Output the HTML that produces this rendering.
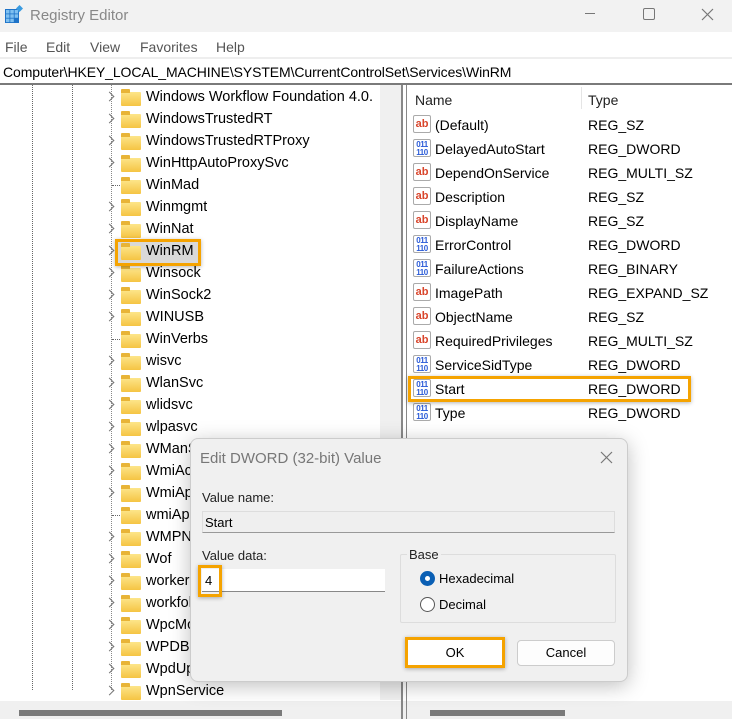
<!DOCTYPE html>
<html><head><meta charset="utf-8"><style>
*{margin:0;padding:0;box-sizing:border-box}
body{width:732px;height:719px;overflow:hidden;background:#fff;font-family:"Liberation Sans",sans-serif;color:#000;position:relative}
.abs{position:absolute}
.t{position:absolute;white-space:nowrap}
.fold{position:absolute;width:20px;height:14px;background:linear-gradient(#fde58a,#f5c443);border-radius:1px}
.fold:before{content:"";position:absolute;left:0;top:-3px;width:9px;height:4px;background:#e8b437;border-radius:1px 1px 0 0}
.chev{position:absolute;width:7px;height:7px;border-right:1.5px solid #777;border-top:1.5px solid #777;transform:rotate(45deg)}
.ic{position:absolute;width:18px;height:18px;border:1px solid #aaa;border-radius:2px;background:#fff;font-size:11px;font-weight:bold;line-height:16px;text-align:center;overflow:hidden}
.ab{color:#d9452b}
.bi{color:#2a5bd7;font-size:8px;line-height:8px;letter-spacing:-0.5px}
</style></head><body>
<div class="abs" style="left:0;top:0;width:732px;height:32px;background:#f2f2f2"></div>
<svg class="abs" style="left:5px;top:5px" width="18" height="18"><rect x="0" y="4" width="14" height="14" fill="#1e73c8"/><g fill="#7fc0f0"><rect x="1" y="5" width="3.5" height="3.5"/><rect x="5.3" y="5" width="3.5" height="3.5"/><rect x="9.6" y="5" width="3.5" height="3.5"/><rect x="1" y="9.3" width="3.5" height="3.5"/><rect x="5.3" y="9.3" width="3.5" height="3.5"/><rect x="9.6" y="9.3" width="3.5" height="3.5"/><rect x="1" y="13.6" width="3.5" height="3.5"/><rect x="5.3" y="13.6" width="3.5" height="3.5"/></g><rect x="12" y="1" width="5" height="5" fill="#3a9be0" transform="rotate(45 14.5 3.5)"/></svg>
<div class="t" style="left:30px;top:7px;font-size:15px;color:#888">Registry Editor</div>
<div class="abs" style="left:585px;top:13px;width:10px;height:1px;background:#777"></div>
<div class="abs" style="left:643px;top:8px;width:12px;height:12px;border:1.3px solid #777;border-radius:2px"></div>
<svg class="abs" style="left:701px;top:8px" width="13" height="13"><path d="M1 1L12 12M12 1L1 12" stroke="#777" stroke-width="1.2"/></svg>
<div class="t" style="left:5px;top:39px;font-size:14px;color:#555">File</div>
<div class="t" style="left:46px;top:39px;font-size:14px;color:#555">Edit</div>
<div class="t" style="left:90px;top:39px;font-size:14px;color:#555">View</div>
<div class="t" style="left:140px;top:39px;font-size:14px;color:#555">Favorites</div>
<div class="t" style="left:216px;top:39px;font-size:14px;color:#555">Help</div>
<div class="abs" style="left:0;top:57px;width:732px;height:2px;background:#eee"></div>
<div class="t" style="left:3px;top:64px;font-size:14px;letter-spacing:-0.1px">Computer\HKEY_LOCAL_MACHINE\SYSTEM\CurrentControlSet\Services\WinRM</div>
<div class="abs" style="left:0;top:83px;width:732px;height:2px;background:#7a7a7a"></div>
<div class="abs" style="left:380px;top:85px;width:21px;height:615px;background:#f0f0f0"></div>
<div class="abs" style="left:32px;top:85px;height:605px;border-left:1px dotted #666"></div>
<div class="abs" style="left:72px;top:85px;height:605px;border-left:1px dotted #666"></div>
<div class="abs" style="left:111px;top:85px;height:605px;border-left:1px dotted #888"></div>
<div class="abs" style="left:401px;top:85px;width:2px;height:634px;background:#888"></div>
<div class="abs" style="left:406px;top:85px;width:1px;height:634px;background:#888"></div>
<div id="tree"></div>
<div class="abs" style="left:115px;top:239px;width:86px;height:27px;background:#d9d9d9;border:3px solid #f5a300;box-shadow:0 1px 4px rgba(0,0,0,.3)"></div>
<div class="fold" style="left:121px;top:246px"></div>
<div class="t" style="left:146px;top:243px;font-size:14.5px">WinRM</div>
<div class="t" style="left:415px;top:92px;font-size:14px;color:#222">Name</div>
<div class="abs" style="left:581px;top:87px;width:1px;height:22px;background:#e5e5e5"></div>
<div class="t" style="left:588px;top:92px;font-size:14px;color:#222">Type</div>
<div id="vals"></div>
<div class="abs" style="left:408px;top:376px;width:283px;height:26px;border:3px solid #f5a300;box-shadow:0 1px 4px rgba(0,0,0,.3)"></div>
<div class="abs" style="left:0;top:701px;width:732px;height:18px;background:#f0f0f0"></div>
<div class="abs" style="left:401px;top:701px;width:2px;height:18px;background:#888"></div>
<div class="abs" style="left:406px;top:701px;width:1px;height:18px;background:#888"></div>
<div class="abs" style="left:19px;top:710px;width:263px;height:6px;background:#7a7a7a"></div>
<div class="abs" style="left:430px;top:710px;width:135px;height:6px;background:#7a7a7a"></div>
<div class="abs" style="left:190px;top:438px;width:438px;height:244px;background:#f0f0f0;border:1px solid #ccc;border-radius:8px;box-shadow:0 4px 20px rgba(0,0,0,.25)"></div>
<div class="t" style="left:200px;top:450px;font-size:15px;color:#777">Edit DWORD (32-bit) Value</div>
<svg class="abs" style="left:600px;top:451px" width="13" height="13"><path d="M1 1L12 12M12 1L1 12" stroke="#777" stroke-width="1.2"/></svg>
<div class="t" style="left:202px;top:490px;font-size:13px;color:#222">Value name:</div>
<div class="abs" style="left:202px;top:511px;width:413px;height:22px;background:#efefef;border:1px solid #ddd;border-bottom:1px solid #999"></div>
<div class="t" style="left:205px;top:515px;font-size:13px">Start</div>
<div class="t" style="left:202px;top:548px;font-size:13px;color:#222">Value data:</div>
<div class="abs" style="left:202px;top:569px;width:183px;height:23px;background:#fff;border-bottom:1px solid #888"></div>
<div class="abs" style="left:198px;top:565px;width:24px;height:32px;border:3px solid #f5a300;box-shadow:0 1px 4px rgba(0,0,0,.3)"></div>
<div class="t" style="left:205px;top:573px;font-size:13px">4</div>
<div class="abs" style="left:400px;top:554px;width:216px;height:69px;border:1px solid #ddd;border-radius:2px"></div>
<div class="t" style="left:407px;top:547px;font-size:13px;color:#222;background:#f0f0f0;padding:0 2px">Base</div>
<div class="abs" style="left:420px;top:571px;width:15px;height:15px;border-radius:50%;background:#0a5fb4"></div>
<div class="abs" style="left:425px;top:576px;width:5px;height:5px;border-radius:50%;background:#fff"></div>
<div class="t" style="left:439px;top:571px;font-size:13px">Hexadecimal</div>
<div class="abs" style="left:420px;top:597px;width:15px;height:15px;border-radius:50%;border:1px solid #555;background:#fff"></div>
<div class="t" style="left:439px;top:597px;font-size:13px">Decimal</div>
<div class="abs" style="left:405px;top:637px;width:100px;height:31px;border:3px solid #f5a300;background:#fff;box-shadow:0 1px 4px rgba(0,0,0,.3)"></div>
<div class="t" style="left:405px;top:645px;width:100px;text-align:center;font-size:13px">OK</div>
<div class="abs" style="left:517px;top:640px;width:98px;height:26px;border:1px solid #ccc;border-radius:4px;background:#fdfdfd"></div>
<div class="t" style="left:517px;top:645px;width:98px;text-align:center;font-size:13px">Cancel</div>
<script>
var items=[["Windows Workflow Foundation 4.0.",1],["WindowsTrustedRT",1],["WindowsTrustedRTProxy",1],["WinHttpAutoProxySvc",1],["WinMad",0],["Winmgmt",1],["WinNat",1],["",2],["Winsock",1],["WinSock2",1],["WINUSB",1],["WinVerbs",0],["wisvc",1],["WlanSvc",1],["wlidsvc",1],["wlpasvc",1],["WManSvc",1],["WmiAcpi",1],["WmiApRpl",1],["wmiApSrv",0],["WMPNetworkSvc",1],["Wof",1],["workerdd",1],["workfolderssvc",1],["WpcMonSvc",1],["WPDBusEnum",1],["WpdUpFltr",1],["WpnService",1]];
var h="";
items.forEach(function(it,i){var c=97+22*i;
 if(it[1]==2){h+='<div class="chev" style="left:106px;top:'+(c-4)+'px"></div>';return;}
 if(it[1])h+='<div class="chev" style="left:106px;top:'+(c-4)+'px"></div>';else h+='<div class="abs" style="left:112px;top:'+c+'px;width:8px;border-top:1px dotted #666"></div>';
 h+='<div class="fold" style="left:121px;top:'+(c-5)+'px"></div><div class="t" style="left:146px;top:'+(c-8)+'px;font-size:14.5px;max-width:234px;overflow:hidden">'+it[0]+'</div>';});
document.getElementById("tree").innerHTML=h;
var v=[["(Default)","REG_SZ",0],["DelayedAutoStart","REG_DWORD",1],["DependOnService","REG_MULTI_SZ",0],["Description","REG_SZ",0],["DisplayName","REG_SZ",0],["ErrorControl","REG_DWORD",1],["FailureActions","REG_BINARY",1],["ImagePath","REG_EXPAND_SZ",0],["ObjectName","REG_SZ",0],["RequiredPrivileges","REG_MULTI_SZ",0],["ServiceSidType","REG_DWORD",1],["Start","REG_DWORD",1],["Type","REG_DWORD",1]];
h="";
v.forEach(function(r,i){var c=124+24*i;
 h+=r[2]?'<div class="ic bi" style="left:413px;top:'+(c-9)+'px;padding-top:1px">011<br>110</div>':'<div class="ic ab" style="left:413px;top:'+(c-9)+'px">ab</div>';
 h+='<div class="t" style="left:435px;top:'+(c-7)+'px;font-size:14px">'+r[0]+'</div><div class="t" style="left:588px;top:'+(c-7)+'px;font-size:14px">'+r[1]+'</div>';});
document.getElementById("vals").innerHTML=h;
</script>
</body></html>
